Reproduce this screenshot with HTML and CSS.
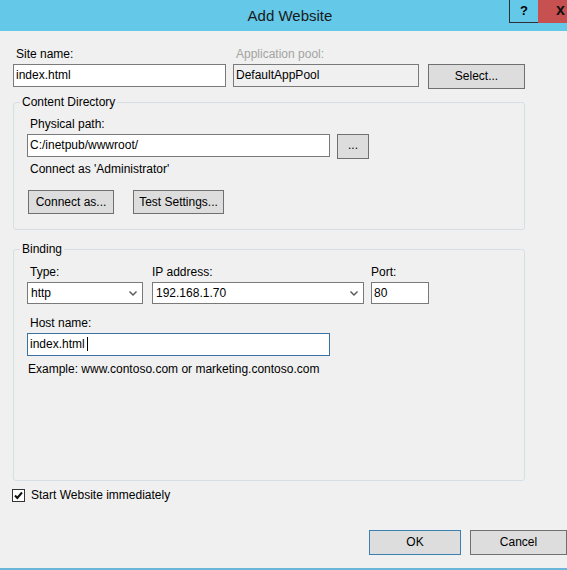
FILE: index.html
```html
<!DOCTYPE html>
<html lang="en">
<head>
    <meta charset="UTF-8">
    <title>Add Website</title>
    <link rel="stylesheet" href="styles.css">
</head>
<body>
    <div class="window">
        <!-- title bar -->
        <div class="titlebar">
            <div class="title">Add Website</div>
            <div class="help-btn">?</div>
            <div class="close-btn">x</div>
        </div>

        <div class="body">
            <!-- site name / app pool -->
            <div class="top-row">
                <div class="field site-field">
                    <div class="lbl">Site name:</div>
                    <div class="textbox">index.html</div>
                </div>
                <div class="field pool-field">
                    <div class="lbl disabled">Application pool:</div>
                    <div class="textbox readonly">DefaultAppPool</div>
                </div>
                <div class="btn select-btn">Select...</div>
            </div>

            <!-- content directory -->
            <fieldset class="group content-group">
                <legend>Content Directory</legend>
                <div class="lbl">Physical path:</div>
                <div class="path-row">
                    <div class="textbox path-box">C:/inetpub/wwwroot/</div>
                    <div class="btn browse-btn">...</div>
                </div>
                <div class="note connect-note">Connect as 'Administrator'</div>
                <div class="btn-row">
                    <div class="btn connect-btn">Connect as...</div>
                    <div class="btn test-btn">Test Settings...</div>
                </div>
            </fieldset>

            <!-- binding -->
            <fieldset class="group binding-group">
                <legend>Binding</legend>
                <div class="binding-row">
                    <div class="field type-field">
                        <div class="lbl">Type:</div>
                        <div class="combo">
                            <span>http</span>
                            <svg width="8" height="5" viewBox="0 0 8 5"><polyline points="0.5,0.5 4,4 7.5,0.5" fill="none" stroke="#555" stroke-width="1.4"/></svg>
                        </div>
                    </div>
                    <div class="field ip-field">
                        <div class="lbl flush">IP address:</div>
                        <div class="combo">
                            <span>192.168.1.70</span>
                            <svg width="8" height="5" viewBox="0 0 8 5"><polyline points="0.5,0.5 4,4 7.5,0.5" fill="none" stroke="#555" stroke-width="1.4"/></svg>
                        </div>
                    </div>
                    <div class="field port-field">
                        <div class="lbl flush">Port:</div>
                        <div class="textbox port-box">80</div>
                    </div>
                </div>
                <div class="lbl host-lbl">Host name:</div>
                <div class="textbox host-box focused">index.html<span class="caret"></span></div>
                <div class="note example-note">Example: www.contoso.com or marketing.contoso.com</div>
            </fieldset>

            <!-- start checkbox -->
            <div class="check-row">
                <svg class="checkbox" width="13" height="13" viewBox="0 0 13 13">
                    <rect x="0.5" y="0.5" width="12" height="12" fill="#fff" stroke="#333"/>
                    <polyline points="3,6.5 5.3,9 10,3.5" fill="none" stroke="#111" stroke-width="2"/>
                </svg>
                <span>Start Website immediately</span>
            </div>

            <!-- ok / cancel -->
            <div class="actions">
                <div class="btn ok-btn">OK</div>
                <div class="btn cancel-btn">Cancel</div>
            </div>
        </div>
    </div>
</body>
</html>
```

FILE: styles.css
```css
*{
    margin: 0;
    padding: 0;
    box-sizing: border-box;
}
body{
    background: #f0f0f0;
    font-family: "Liberation Sans", Arial, sans-serif;
    font-size: 12px;
    color: #000;
    overflow: hidden;
}
.window{
    width: 567px;
    height: 570px;
    border-bottom: 2px solid #6ab6da;
    display: flex;
    flex-direction: column;
}
.titlebar{
    height: 31px;
    background: #64c8e9;
    position: relative;
    overflow: hidden;
    flex-shrink: 0;
}
.title{
    font-size: 15px;
    line-height: 31px;
    text-align: center;
    padding-left: 13px;
    color: #1a1a1a;
}
.help-btn{
    position: absolute;
    top: 0;
    left: 509px;
    width: 29px;
    height: 23px;
    border-left: 1px solid #2f2f2f;
    border-bottom: 1px solid #2f2f2f;
    text-align: center;
    font-weight: bold;
    font-size: 13px;
    line-height: 22px;
}
.close-btn{
    position: absolute;
    top: 0;
    left: 538px;
    width: 45px;
    height: 23px;
    background: #c75050;
    text-align: center;
    font-weight: bold;
    font-size: 16px;
    line-height: 20px;
    color: #111;
}
.body{
    flex: 1;
    padding: 16px 0 0 13px;
    display: flex;
    flex-direction: column;
}
.lbl{
    height: 17px;
    line-height: 15px;
    padding-left: 3px;
    white-space: nowrap;
}
.lbl.flush{
    padding-left: 0;
}
.lbl.disabled{
    color: #a3a3a3;
}
.textbox{
    height: 23px;
    border: 1px solid #7a7a7a;
    background: #fff;
    padding: 0 2px;
    line-height: 20px;
    white-space: nowrap;
}
.textbox.readonly{
    background: #f0f0f0;
}
.textbox.focused{
    border-color: #3a72a3;
}
.caret{
    display: inline-block;
    width: 1px;
    height: 14px;
    background: #000;
    margin-left: 2px;
    vertical-align: -3px;
}
.btn{
    height: 25px;
    border: 1px solid #707070;
    background: #dddddd;
    text-align: center;
    line-height: 22px;
    white-space: nowrap;
}
.note{
    line-height: 15px;
    padding-left: 3px;
}

/* top row */
.top-row{
    display: flex;
    align-items: flex-start;
}
.site-field{
    width: 213px;
}
.pool-field{
    width: 186px;
    margin-left: 7px;
}
.select-btn{
    width: 97px;
    margin-left: 9px;
    margin-top: 17px;
}

/* group boxes */
.group{
    width: 512px;
    border: 1px solid #d5dfe5;
    border-radius: 3px;
    padding: 7px 0 15px 13px;
    min-width: 0;
}
.group legend{
    margin-left: -7px;
    padding: 0 2px;
    line-height: 16px;
}
.content-group{
    margin-top: 5px;
}
.path-row{
    display: flex;
    align-items: flex-start;
    gap: 7px;
}
.path-box{
    width: 303px;
}
.browse-btn{
    width: 32px;
    line-height: 20px;
}
.connect-note{
    margin-top: 3px;
}
.btn-row{
    display: flex;
    gap: 19px;
    margin-top: 13px;
    padding-left: 1px;
}
.btn-row .btn{
    height: 24px;
    line-height: 22px;
}
.connect-btn{
    width: 86px;
}
.test-btn{
    width: 91px;
}

.binding-group{
    margin-top: 11px;
    padding-top: 8px;
    padding-bottom: 103px;
}
.binding-row{
    display: flex;
}
.type-field{
    width: 116px;
}
.ip-field{
    width: 212px;
    margin-left: 9px;
}
.port-field{
    width: 58px;
    margin-left: 7px;
}
.combo{
    height: 22px;
    border: 1px solid #7a7a7a;
    background: #fff;
    display: flex;
    align-items: center;
    justify-content: space-between;
    padding: 0 5px 0 3px;
}
.port-box{
    height: 22px;
    line-height: 20px;
}
.host-lbl{
    margin-top: 12px;
}
.host-box{
    width: 303px;
}
.example-note{
    margin-top: 6px;
    padding-left: 1px;
}

/* checkbox */
.check-row{
    display: flex;
    align-items: center;
    gap: 6px;
    margin-top: 7px;
    margin-left: -1px;
    line-height: 15px;
}
.checkbox{
    display: block;
}

/* dialog buttons */
.actions{
    display: flex;
    justify-content: flex-end;
    gap: 9px;
    margin-top: 27px;
}
.ok-btn{
    width: 92px;
    border-color: #3c7fb1;
}
.cancel-btn{
    width: 97px;
}
```
